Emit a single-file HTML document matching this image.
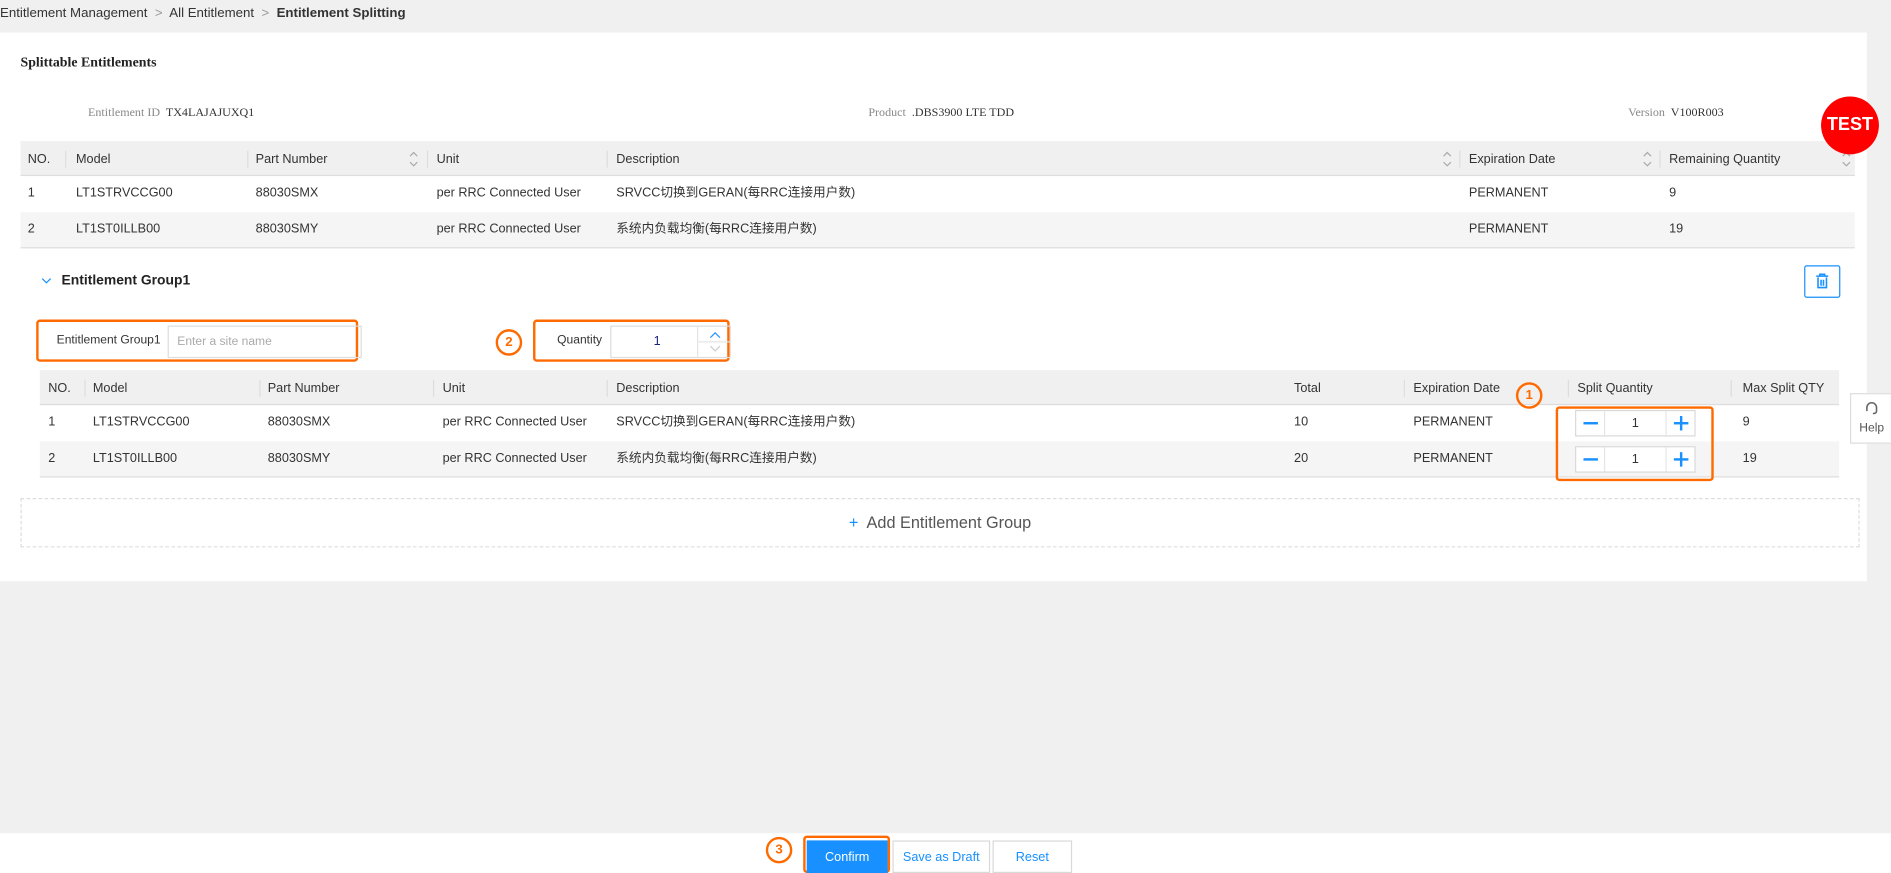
<!DOCTYPE html>
<html><head><meta charset="utf-8"><style>
*{box-sizing:border-box;margin:0;padding:0}
html,body{width:1891px;height:873px;overflow:hidden;background:#f0f0f0}
#w{position:absolute;left:0;top:0;width:1568px;height:724px;transform:scale(1.20599,1.20580);transform-origin:0 0;font-family:"Liberation Sans","Noto Sans CJK SC",sans-serif;font-size:10.5px;color:#333}
.a{position:absolute;white-space:nowrap;line-height:13px}
.serif{font-family:"Liberation Serif","Noto Serif CJK SC",serif}
.row{position:absolute;left:0;right:0}
.sep{position:absolute;width:1px;background:#ddd;top:8px;height:14px}
.sort{position:absolute;top:7px}
.ob{position:absolute;border:2px solid #ff6a00;border-radius:3px}
.oc{position:absolute;width:22px;height:22px;border:2px solid #ff6a00;border-radius:50%;color:#ff6a00;font-weight:bold;font-size:11px;text-align:center;line-height:18px}
.step{position:absolute;width:100px;height:22px;border:1px solid #d9d9d9;background:#fff}
.step .m{position:absolute;left:0;top:0;width:24px;height:20px;border-right:1px solid #e5e5e5}
.step .m:after{content:"";position:absolute;left:6px;top:9px;width:12px;height:2px;background:#1890ff}
.step .p{position:absolute;right:0;top:0;width:24px;height:20px;border-left:1px solid #e5e5e5}
.step .p:before{content:"";position:absolute;left:6px;top:9px;width:12px;height:2px;background:#1890ff}
.step .p:after{content:"";position:absolute;left:11px;top:4px;width:2px;height:12px;background:#1890ff}
.step .v{position:absolute;left:24px;right:24px;top:4px;text-align:center;color:#333;line-height:13px}
.btn{position:absolute;top:697px;height:27px;border:1px solid #d9d9d9;background:#fff;color:#1890ff;text-align:center;line-height:26px;font-size:10.5px}
</style></head><body><div id="w">
<svg width="0" height="0" style="position:absolute"><defs><symbol id="s" viewBox="0 0 8 16"><path d="M1 5.5L4 2.5L7 5.5M1 10.5L4 13.5L7 10.5" stroke="#aaa" fill="none" stroke-width="1"/></symbol></defs></svg>
<div class="a" style="left:0;top:5px;font-size:11px;color:#333">Entitlement Management <span style="color:#999">&nbsp;&gt;&nbsp;</span> All Entitlement <span style="color:#999">&nbsp;&gt;&nbsp;</span> <b>Entitlement Splitting</b></div>
<div style="position:absolute;left:0;top:27px;width:1548px;height:455px;background:#fff"></div>
<div class="a serif" style="left:17px;top:46px;font-weight:bold;font-size:11.5px;color:#222">Splittable Entitlements</div>
<div class="a serif" style="left:73px;top:87px;color:#888;font-size:10px">Entitlement ID&nbsp; <span style="color:#333">TX4LAJAJUXQ1</span></div>
<div class="a serif" style="left:720px;top:87px;color:#888;font-size:10px">Product&nbsp; <span style="color:#333">.DBS3900 LTE TDD</span></div>
<div class="a serif" style="left:1350px;top:87px;color:#888;font-size:10px">Version&nbsp; <span style="color:#333">V100R003</span></div>

<div style="position:absolute;left:17px;top:117px;width:1521px;height:89px">
 <div class="row" style="top:0;height:29px;background:#f0f0f0;border-bottom:1px solid #ddd"></div>
 <div class="row" style="top:59px;height:30px;background:#f5f5f5;border-bottom:1px solid #ddd"></div>
</div>
<div style="position:absolute;left:0;top:117px">
 <div class="a" style="left:23px;top:9px">NO.</div>
 <div class="sep" style="left:54px"></div><div class="a" style="left:63px;top:9px">Model</div>
 <div class="sep" style="left:205px"></div><div class="a" style="left:212px;top:9px">Part Number</div><svg class="sort" style="left:339px" width="8" height="16"><use href="#s"/></svg>
 <div class="sep" style="left:354px"></div><div class="a" style="left:362px;top:9px">Unit</div>
 <div class="sep" style="left:503px"></div><div class="a" style="left:511px;top:9px">Description</div><svg class="sort" style="left:1196px" width="8" height="16"><use href="#s"/></svg>
 <div class="sep" style="left:1210px"></div><div class="a" style="left:1218px;top:9px">Expiration Date</div><svg class="sort" style="left:1362px" width="8" height="16"><use href="#s"/></svg>
 <div class="sep" style="left:1376px"></div><div class="a" style="left:1384px;top:9px">Remaining Quantity</div><svg class="sort" style="left:1527px" width="8" height="16"><use href="#s"/></svg>
 <div class="a" style="left:23px;top:37px">1</div><div class="a" style="left:63px;top:37px">LT1STRVCCG00</div><div class="a" style="left:212px;top:37px">88030SMX</div><div class="a" style="left:362px;top:37px">per RRC Connected User</div><div class="a" style="left:511px;top:37px">SRVCC切换到GERAN(每RRC连接用户数)</div><div class="a" style="left:1218px;top:37px">PERMANENT</div><div class="a" style="left:1384px;top:37px">9</div>
 <div class="a" style="left:23px;top:67px">2</div><div class="a" style="left:63px;top:67px">LT1ST0ILLB00</div><div class="a" style="left:212px;top:67px">88030SMY</div><div class="a" style="left:362px;top:67px">per RRC Connected User</div><div class="a" style="left:511px;top:67px">系统内负载均衡(每RRC连接用户数)</div><div class="a" style="left:1218px;top:67px">PERMANENT</div><div class="a" style="left:1384px;top:67px">19</div>
</div>
<div class="a" style="left:1510px;top:80px;width:48px;height:48px;border-radius:50%;background:#f00;color:#fff;font-weight:bold;font-size:15px;text-align:center;line-height:48px">TEST</div>

<svg class="a" style="left:34px;top:230px" width="9" height="6"><path d="M1 1L4.5 4.5L8 1" stroke="#1890ff" fill="none"/></svg>
<div class="a" style="left:51px;top:227px;font-weight:bold;font-size:11.5px;color:#222">Entitlement Group1</div>
<div class="a" style="left:1496px;top:220px;width:30px;height:27px;border:1px solid #1890ff;border-radius:2px">
 <svg width="28" height="25" viewBox="0 0 28 25"><path d="M9 8h10M12 8V6.5h4V8M10.5 9v8.5h7V9M13 11v5M15 11v5" stroke="#1890ff" fill="none" stroke-width="1.3"/></svg></div>

<div class="ob" style="left:30px;top:265px;width:267px;height:35px"></div>
<div class="a" style="left:47px;top:276px;font-size:10px">Entitlement Group1</div>
<div class="a" style="left:139px;top:270px;width:161px;height:27px;border:1px solid #ddd;color:#aaa;padding:6px 7px;font-size:10px">Enter a site name</div>
<div class="oc" style="left:411px;top:273px">2</div>
<div class="ob" style="left:442px;top:265px;width:163px;height:35px"></div>
<div class="a" style="left:462px;top:276px;font-size:10px">Quantity</div>
<div class="a" style="left:506px;top:270px;width:100px;height:27px;border:1px solid #ddd"><span class="a" style="left:35px;top:6px;color:#1a237e">1</span><div class="a" style="left:71px;top:0;width:1px;height:25px;background:#e5e5e5"></div><div class="a" style="left:72px;top:12px;width:27px;height:1px;background:#e5e5e5"></div><svg class="a" style="left:81px;top:3px" width="10" height="7"><path d="M1 6L5 2L9 6" stroke="#1890ff" fill="none"/></svg><svg class="a" style="left:81px;top:15px" width="10" height="7"><path d="M1 1L5 5L9 1" stroke="#ccc" fill="none"/></svg></div>

<div style="position:absolute;left:33px;top:307px;width:1492px;height:89px">
 <div class="row" style="top:0;height:29px;background:#f0f0f0;border-bottom:1px solid #ddd"></div>
 <div class="row" style="top:59px;height:30px;background:#f5f5f5;border-bottom:1px solid #ddd"></div>
</div>
<div style="position:absolute;left:0;top:307px">
 <div class="a" style="left:40px;top:9px">NO.</div>
 <div class="sep" style="left:70px"></div><div class="a" style="left:77px;top:9px">Model</div>
 <div class="sep" style="left:215px"></div><div class="a" style="left:222px;top:9px">Part Number</div>
 <div class="sep" style="left:359px"></div><div class="a" style="left:367px;top:9px">Unit</div>
 <div class="sep" style="left:503px"></div><div class="a" style="left:511px;top:9px">Description</div>
 <div class="a" style="left:1073px;top:9px">Total</div>
 <div class="sep" style="left:1164px"></div><div class="a" style="left:1172px;top:9px">Expiration Date</div>
 <div class="sep" style="left:1300px"></div><div class="a" style="left:1308px;top:9px">Split Quantity</div>
 <div class="sep" style="left:1435px"></div><div class="a" style="left:1445px;top:9px">Max Split QTY</div>
 <div class="a" style="left:40px;top:37px">1</div><div class="a" style="left:77px;top:37px">LT1STRVCCG00</div><div class="a" style="left:222px;top:37px">88030SMX</div><div class="a" style="left:367px;top:37px">per RRC Connected User</div><div class="a" style="left:511px;top:37px">SRVCC切换到GERAN(每RRC连接用户数)</div><div class="a" style="left:1073px;top:37px">10</div><div class="a" style="left:1172px;top:37px">PERMANENT</div><div class="a" style="left:1445px;top:37px">9</div>
 <div class="a" style="left:40px;top:67px">2</div><div class="a" style="left:77px;top:67px">LT1ST0ILLB00</div><div class="a" style="left:222px;top:67px">88030SMY</div><div class="a" style="left:367px;top:67px">per RRC Connected User</div><div class="a" style="left:511px;top:67px">系统内负载均衡(每RRC连接用户数)</div><div class="a" style="left:1073px;top:67px">20</div><div class="a" style="left:1172px;top:67px">PERMANENT</div><div class="a" style="left:1445px;top:67px">19</div>
</div>
<div class="oc" style="left:1257px;top:317px">1</div>
<div class="ob" style="left:1290px;top:337px;width:131px;height:62px"></div>
<div class="step" style="left:1306px;top:340px"><div class="m"></div><div class="v">1</div><div class="p"></div></div>
<div class="step" style="left:1306px;top:370px"><div class="m"></div><div class="v">1</div><div class="p"></div></div>

<div style="position:absolute;left:1534px;top:326px;width:36px;height:42px;background:#fff;border:1px solid #ddd;text-align:center;color:#555;font-size:10px;line-height:12px">
 <svg width="14" height="14" viewBox="0 0 14 14" style="margin-top:5px"><path d="M3 8V6a4 4 0 0 1 8 0v2M3 7v2M11 7v2M11 9q0 2-3 2" stroke="#666" fill="none" stroke-width="1.3"/></svg><br>Help</div>

<div style="position:absolute;left:17px;top:413px;width:1525px;height:41px;border:1px dashed #ddd;text-align:center;line-height:39px;font-size:13.5px;color:#555"><span style="color:#1890ff">+</span>&nbsp; Add Entitlement Group</div>

<div style="position:absolute;left:0;top:691px;width:1568px;height:33px;background:#fff"></div>
<div class="oc" style="left:635px;top:694px">3</div>
<div class="ob" style="left:666px;top:693px;width:72px;height:31px"></div>
<div class="btn" style="left:669px;width:67px;background:#1890ff;border-color:#1890ff;color:#fff">Confirm</div>
<div class="btn" style="left:740px;width:81px">Save as Draft</div>
<div class="btn" style="left:823px;width:66px">Reset</div>
</div></body></html>
